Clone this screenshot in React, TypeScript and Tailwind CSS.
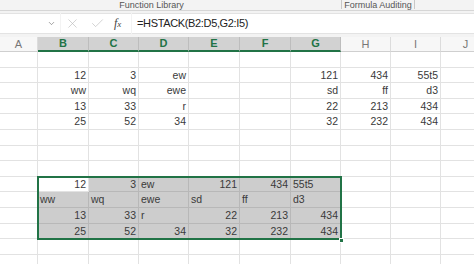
import { Check, ChevronDown, X } from "lucide-react";

type Cell = { v: string; left?: boolean; active?: boolean };

const COLS = ["A", "B", "C", "D", "E", "F", "G", "H", "I", "J"];
const WIDTHS = [38, 51, 50, 50, 51, 51, 50, 50, 50, 50];
const SELECTED_COLS = ["B", "C", "D", "E", "F", "G"];

const R = (v: string): Cell => ({ v });
const L = (v: string): Cell => ({ v, left: true });
const E: Cell = { v: "" };

// rows 1..14, columns A..J
const ROWS: Cell[][] = [
  [E, E, E, E, E, E, E, E, E, E],
  [E, R("12"), R("3"), R("ew"), E, E, R("121"), R("434"), R("55t5"), E],
  [E, R("ww"), R("wq"), R("ewe"), E, E, R("sd"), R("ff"), R("d3"), E],
  [E, R("13"), R("33"), R("r"), E, E, R("22"), R("213"), R("434"), E],
  [E, R("25"), R("52"), R("34"), E, E, R("32"), R("232"), R("434"), E],
  [E, E, E, E, E, E, E, E, E, E],
  [E, E, E, E, E, E, E, E, E, E],
  [E, E, E, E, E, E, E, E, E, E],
  [E, { v: "12", active: true }, R("3"), L("ew"), R("121"), R("434"), L("55t5"), E, E, E],
  [E, L("ww"), L("wq"), L("ewe"), L("sd"), L("ff"), L("d3"), E, E, E],
  [E, R("13"), R("33"), L("r"), R("22"), R("213"), R("434"), E, E, E],
  [E, R("25"), R("52"), R("34"), R("32"), R("232"), R("434"), E, E, E],
  [E, E, E, E, E, E, E, E, E, E],
  [E, E, E, E, E, E, E, E, E, E],
];

// selection B9:G12
const inSelection = (r: number, c: number) => r >= 8 && r <= 11 && c >= 1 && c <= 6;

export default function App() {
  return (
    <div className="h-[264px] w-[474px] overflow-hidden bg-white font-['Liberation_Sans',sans-serif] text-[#333]">
      {/* Ribbon group labels (cut off at the top) */}
      <div className="h-[11px] overflow-hidden border-b border-[#d6d6d6] bg-[#f3f3f3] text-[9px] leading-none text-[#555]">
        <div className="flex h-full items-end">
          <div className="w-[341px] text-center">
            <span className="ml-[-38px]">Function Library</span>
          </div>
          <div className="h-[9px] self-start border-l border-[#c8c8c8]" />
          <div className="w-[72px] text-center">Formula Auditing</div>
          <div className="h-[9px] self-start border-l border-[#c8c8c8]" />
        </div>
      </div>

      {/* Formula bar */}
      <div className="flex h-[23px] items-center bg-[#f3f3f3] pt-[1px]">
        <div className="flex h-[21px] w-[60px] items-center justify-end border-y border-[#e3e3e3] bg-white pr-[4px]">
          <ChevronDown size={9} strokeWidth={1.6} className="text-[#666]" />
        </div>
        <div className="w-[1px]" />
        <div className="flex h-[21px] w-[70px] items-center border-y border-[#e3e3e3] bg-white text-[#b9b9b9]">
          <X size={15} strokeWidth={1} className="ml-[4px]" />
          <Check size={15} strokeWidth={1} className="ml-[10px]" />
          <span className="ml-[9px] font-['Liberation_Serif',serif] text-[12px] italic text-[#444]">
            f<span className="text-[9px]">x</span>
          </span>
        </div>
        <div className="w-[1px]" />
        <div className="flex h-[21px] flex-1 items-center border-y border-[#e3e3e3] bg-white pl-[5px] text-[11px] tracking-[-0.35px] text-[#222]">
          =HSTACK(B2:D5,G2:I5)
        </div>
      </div>
      <div className="h-[3px] bg-[#f3f3f3]" />

      {/* Column headers */}
      <div className="flex h-[15px]">
        {COLS.map((c, i) => {
          const sel = SELECTED_COLS.includes(c);
          return (
            <div
              key={c}
              style={{ width: WIDTHS[i] }}
              className={`flex shrink-0 items-center justify-center border-r text-[11px] ${
                sel
                  ? "border-b-2 border-r-[#bdbdbd] border-b-[#217346] bg-[#d2d2d2] font-bold text-[#217346]"
                  : "border-b border-r-[#dcdcdc] border-b-[#cfcfcf] bg-[#f7f7f7] text-[#777]"
              }`}
            >
              {c}
            </div>
          );
        })}
      </div>

      {/* Cells */}
      <div className="relative">
        {ROWS.map((row, r) => (
          <div key={r} className="flex h-[15.6px]">
            {row.map((cell, c) => {
              const sel = inSelection(r, c) && !cell.active;
              return (
                <div
                  key={c}
                  style={{ width: WIDTHS[c] }}
                  className={`flex shrink-0 items-center overflow-visible whitespace-nowrap border-b border-r px-[2px] text-[10.5px] leading-none ${
                    cell.left ? "justify-start" : "justify-end"
                  } ${
                    sel
                      ? "border-[#b8b8b8] bg-[#cdcdcd] text-[#3a3a3a]"
                      : "border-[#e2e2e2] bg-white text-[#3a3a3a]"
                  }`}
                >
                  {cell.v}
                </div>
              );
            })}
          </div>
        ))}

        {/* Selection outline + fill handle */}
        <div className="absolute left-[37px] top-[124px] h-[64px] w-[305px] border-2 border-[#217346]" />
        <div className="absolute left-[339px] top-[186px] h-[5px] w-[5px] border border-white bg-[#217346]" />
      </div>
    </div>
  );
}
